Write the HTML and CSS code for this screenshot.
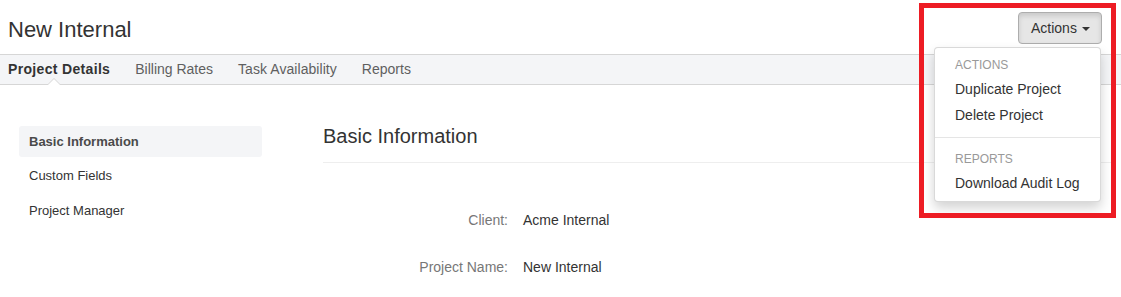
FILE: index.html
```html
<!DOCTYPE html>
<html lang="en">
<head>
<meta charset="utf-8">
<title>New Internal</title>
<link rel="stylesheet" href="styles.css">
</head>
<body>
<div class="page">
  <header class="page-header">
    <h1 class="page-title">New Internal</h1>
    <div class="dropdown">
      <button class="btn-actions" type="button">Actions <span class="caret"></span></button>
      <div class="dropdown-menu">
        <div class="dropdown-header">ACTIONS</div>
        <a class="dropdown-item">Duplicate Project</a>
        <a class="dropdown-item">Delete Project</a>
        <div class="dropdown-divider"></div>
        <div class="dropdown-header">REPORTS</div>
        <a class="dropdown-item">Download Audit Log</a>
      </div>
    </div>
  </header>
  <nav class="tabbar">
    <a class="tab tab-active">Project Details</a>
    <a class="tab">Billing Rates</a>
    <a class="tab">Task Availability</a>
    <a class="tab">Reports</a>
  </nav>
  <div class="content">
    <aside class="sidebar">
      <a class="side-item side-active">Basic Information</a>
      <a class="side-item">Custom Fields</a>
      <a class="side-item">Project Manager</a>
    </aside>
    <main class="main">
      <h2 class="section-title">Basic Information</h2>
      <div class="form">
        <div class="form-row">
          <div class="form-label">Client:</div>
          <div class="form-value">Acme Internal</div>
        </div>
        <div class="form-row">
          <div class="form-label">Project Name:</div>
          <div class="form-value">New Internal</div>
        </div>
      </div>
    </main>
  </div>
  <div class="highlight-box"></div>
</div>
</body>
</html>
```

FILE: styles.css
```css
* { box-sizing: border-box; }
html, body {
  margin: 0;
  padding: 0;
  background: #fff;
}
body {
  font-family: "Liberation Sans", Arial, sans-serif;
  font-size: 14px;
  color: #333;
  width: 1121px;
  height: 297px;
  overflow: hidden;
}
.page {
  position: relative;
  width: 1121px;
  height: 297px;
}
.page-header {
  height: 54px;
  display: flex;
  justify-content: space-between;
  align-items: flex-start;
  padding: 0 19px 0 8px;
}
.page-title {
  margin: 0;
  padding-top: 17px;
  font-size: 22px;
  line-height: 25px;
  font-weight: normal;
  color: #333;
}
.dropdown {
  position: relative;
  margin-top: 12px;
  z-index: 5;
}
.btn-actions {
  display: block;
  height: 32px;
  width: 84px;
  padding: 5px 12px;
  font-family: inherit;
  font-size: 14px;
  line-height: 20px;
  color: #333;
  background: #e6e6e6;
  border: 1px solid #adadad;
  border-radius: 4px;
  box-shadow: inset 0 3px 5px rgba(0, 0, 0, 0.125);
  text-align: left;
  white-space: nowrap;
}
.caret {
  display: inline-block;
  width: 0;
  height: 0;
  margin-left: 1px;
  vertical-align: middle;
  border-top: 4px solid #333;
  border-left: 4px solid transparent;
  border-right: 4px solid transparent;
}
.dropdown-menu {
  position: absolute;
  top: 35px;
  right: 1px;
  width: 167px;
  padding: 5px 0;
  background: #fff;
  border: 1px solid rgba(0, 0, 0, 0.15);
  border-radius: 4px;
  box-shadow: 0 6px 12px rgba(0, 0, 0, 0.175);
}
.dropdown-header {
  padding: 4px 20px 2px;
  font-size: 12px;
  line-height: 17px;
  color: #999;
}
.dropdown-item {
  display: block;
  padding: 3px 20px;
  line-height: 20px;
  color: #333;
  white-space: nowrap;
}
.dropdown-divider {
  height: 1px;
  margin: 9px 0;
  background: #e5e5e5;
}
.tabbar {
  display: flex;
  gap: 25px;
  height: 31px;
  padding-left: 8px;
  background: #f4f5f7;
  border-top: 1px solid #d6d6d6;
  border-bottom: 1px solid #d6d6d6;
}
.tab {
  position: relative;
  line-height: 29px;
  font-size: 14px;
  color: #5f5f5f;
}
.tab:nth-child(3) {
  letter-spacing: 0.06px;
}
.tab-active {
  font-weight: bold;
  color: #333;
  letter-spacing: 0.33px;
}
.tab-active::before,
.tab-active::after {
  content: "";
  position: absolute;
  width: 0;
  height: 0;
  border-style: solid;
  border-color: transparent;
}
.tab-active::before {
  left: 39px;
  bottom: -1px;
  border-width: 0 7px 7px 7px;
  border-bottom-color: #d6d6d6;
}
.tab-active::after {
  left: 40px;
  bottom: -1px;
  border-width: 0 6px 6px 6px;
  border-bottom-color: #fff;
}
.content {
  display: flex;
  gap: 61px;
  padding: 41px 8px 0 19px;
}
.sidebar {
  width: 243px;
  flex: none;
  display: flex;
  flex-direction: column;
  gap: 3px;
}
.side-item {
  display: block;
  height: 31px;
  line-height: 31px;
  padding-left: 10px;
  font-size: 13px;
  color: #333;
  border-radius: 3px;
}
.side-item:last-child {
  margin-top: 1px;
}
.side-active {
  background: #f4f5f7;
  font-weight: bold;
  color: #4a4a4a;
}
.main {
  flex: 1;
}
.section-title {
  margin: -1px 0 0 0;
  padding-bottom: 15px;
  font-size: 20px;
  line-height: 22px;
  font-weight: normal;
  color: #333;
  border-bottom: 1px solid #eee;
}
.form {
  padding-top: 47px;
  display: flex;
  flex-direction: column;
  gap: 27px;
}
.form-row {
  display: flex;
  gap: 15px;
  line-height: 20px;
}
.form-label {
  width: 185px;
  text-align: right;
  color: #777;
}
.form-value {
  color: #333;
}
.highlight-box {
  position: absolute;
  left: 919px;
  top: 3px;
  width: 197px;
  height: 215px;
  border: 5px solid #ed1c24;
  z-index: 10;
  pointer-events: none;
}
```
